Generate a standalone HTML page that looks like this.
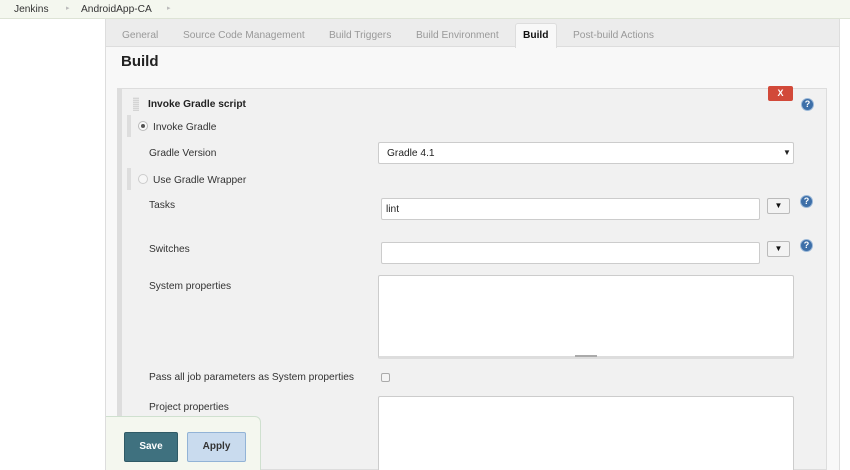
<!DOCTYPE html>
<html><head><style>
*{box-sizing:border-box;margin:0;padding:0}
html,body{width:850px;height:470px;overflow:hidden}
body{background:#fff;font-family:"Liberation Sans",Arial,sans-serif;font-size:10.2px;color:#333;position:relative}
.a{position:absolute}
.lbl{position:absolute;font-size:10.2px;color:#333}
.inp{position:absolute;background:#fff;border:1px solid #ccc;border-radius:2px}
.help{position:absolute;width:13px;height:13px;border-radius:50%;background:#3d6fa8;border:1px solid #9bb8d8;color:#fff;font-size:9px;font-weight:bold;text-align:center;line-height:11px}
.dd{position:absolute;width:23px;height:16px;background:#f3f3f3;border:1px solid #bbb;border-radius:2px;font-size:8px;text-align:center;line-height:14px;color:#111}
.bar{position:absolute;background:#ddd;width:4px}
</style></head><body>
<div class="a" style="left:0;top:0;width:850px;height:19px;background:#f4f7ef;border-bottom:1px solid #dde3d5"></div>
<div class="lbl" style="left:14px;top:4px">Jenkins</div>
<div class="lbl" style="left:66px;top:4px;color:#bbb;font-size:7px">▸</div>
<div class="lbl" style="left:81px;top:4px">AndroidApp-CA</div>
<div class="lbl" style="left:167px;top:4px;color:#bbb;font-size:7px">▸</div>

<div class="a" style="left:105px;top:19px;width:735px;height:451px;background:#f8f8f8;border-left:1px solid #ddd;border-right:1px solid #ddd"></div>
<div class="a" style="left:106px;top:19px;width:733px;height:28px;background:#ececec;border-bottom:1px solid #ddd"></div>
<div class="lbl" style="left:122px;top:30px;color:#999">General</div>
<div class="lbl" style="left:183px;top:30px;color:#999">Source Code Management</div>
<div class="lbl" style="left:329px;top:30px;color:#999">Build Triggers</div>
<div class="lbl" style="left:416px;top:30px;color:#999">Build Environment</div>
<div class="a" style="left:515px;top:23px;width:42px;height:25px;background:#f8f8f8;border:1px solid #ddd;border-bottom:none;border-radius:3px 3px 0 0"></div>
<div class="lbl" style="left:523px;top:30px;font-weight:bold;color:#111">Build</div>
<div class="lbl" style="left:573px;top:30px;color:#999">Post-build Actions</div>
<div class="lbl" style="left:121px;top:53px;font-size:15px;font-weight:bold;color:#222">Build</div>

<div class="a" style="left:117px;top:88px;width:710px;height:382px;background:#f1f1f1;border:1px solid #ddd;border-left:5px solid #ddd"></div>
<div class="a" style="left:133px;top:97px;width:6px;height:14px;background:repeating-linear-gradient(#e6e6e6 0 1px,#d4d4d4 1px 2px)"></div>
<div class="lbl" style="left:148px;top:99px;font-weight:bold;color:#222">Invoke Gradle script</div>
<div class="a" style="left:768px;top:86px;width:25px;height:15px;background:#d24939;border-radius:2px;color:#fff;font-size:9px;font-weight:bold;text-align:center;line-height:15px">X</div>
<div class="help" style="left:801px;top:98px">?</div>

<div class="bar" style="left:127px;top:115px;height:22px"></div>
<div class="a" style="left:138px;top:121px;width:10px;height:10px;border-radius:50%;border:1px solid #bbb;background:#fafafa"><div class="a" style="left:2px;top:2px;width:4px;height:4px;border-radius:50%;background:#555"></div></div>
<div class="lbl" style="left:153px;top:122px">Invoke Gradle</div>
<div class="lbl" style="left:149px;top:148px">Gradle Version</div>
<div class="inp" style="left:378px;top:142px;width:416px;height:22px"></div>
<div class="lbl" style="left:387px;top:148px;color:#222">Gradle 4.1</div>
<div class="lbl" style="left:783px;top:148px;font-size:8px;color:#222">▼</div>

<div class="bar" style="left:127px;top:168px;height:22px"></div>
<div class="a" style="left:138px;top:174px;width:10px;height:10px;border-radius:50%;border:1px solid #ccc;background:#f6f6f6"></div>
<div class="lbl" style="left:153px;top:175px">Use Gradle Wrapper</div>

<div class="lbl" style="left:149px;top:200px">Tasks</div>
<div class="inp" style="left:381px;top:198px;width:379px;height:22px"></div>
<div class="lbl" style="left:386px;top:204px;color:#222">lint</div>
<div class="dd" style="left:767px;top:198px">▼</div>
<div class="help" style="left:800px;top:195px">?</div>

<div class="lbl" style="left:149px;top:244px">Switches</div>
<div class="inp" style="left:381px;top:242px;width:379px;height:22px"></div>
<div class="dd" style="left:767px;top:241px">▼</div>
<div class="help" style="left:800px;top:239px">?</div>

<div class="lbl" style="left:149px;top:281px">System properties</div>
<div class="inp" style="left:378px;top:275px;width:416px;height:84px;border-bottom:3px solid #ddd"></div>
<div class="a" style="left:575px;top:355px;width:22px;height:2px;background:#aaa"></div>

<div class="lbl" style="left:149px;top:372px">Pass all job parameters as System properties</div>
<div class="a" style="left:381px;top:373px;width:9px;height:9px;border:1px solid #aaa;border-radius:2px;background:#f4f4f4"></div>

<div class="lbl" style="left:149px;top:402px">Project properties</div>
<div class="inp" style="left:378px;top:396px;width:416px;height:80px"></div>

<div class="a" style="left:106px;top:416px;width:155px;height:60px;background:#f4f7ef;border:1px solid #cfe0cf;border-radius:0 6px 0 0;border-left:none"></div>
<div class="a" style="left:124px;top:432px;width:54px;height:30px;background:#3f717f;border:1px solid #2f5a66;border-radius:2px;color:#fff;font-weight:bold;font-size:10px;text-align:center;line-height:28px">Save</div>
<div class="a" style="left:187px;top:432px;width:59px;height:30px;background:#c9dbee;border:1px solid #92b3d6;border-radius:2px;color:#333;font-weight:bold;font-size:10px;text-align:center;line-height:28px">Apply</div>
</body></html>
